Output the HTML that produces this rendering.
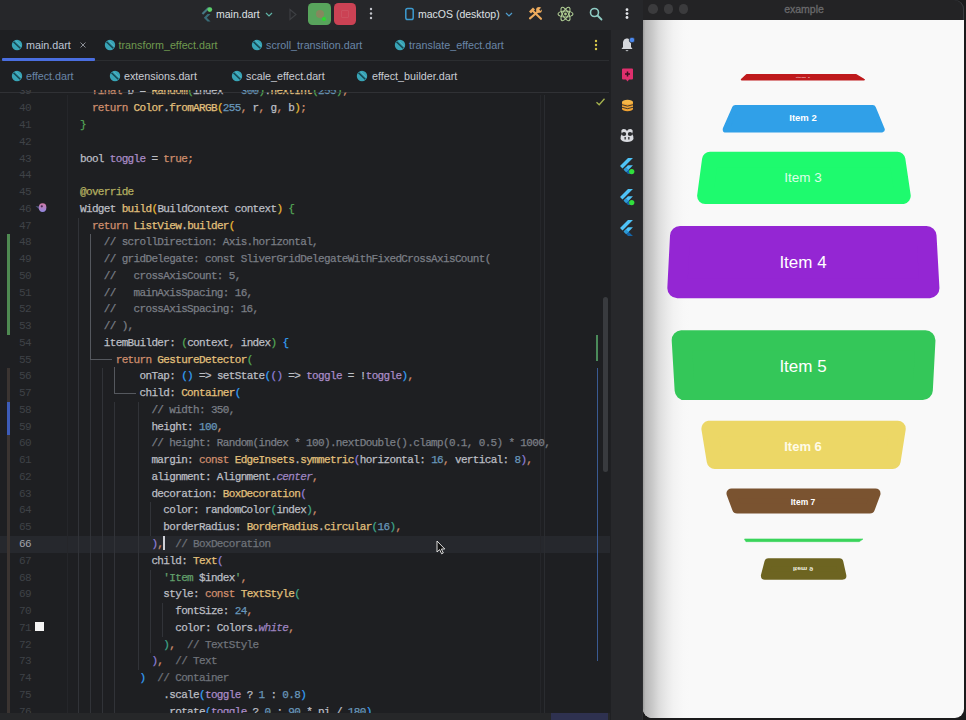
<!DOCTYPE html>
<html><head><meta charset="utf-8">
<style>
*{margin:0;padding:0;box-sizing:border-box}
html,body{width:966px;height:720px;overflow:hidden;background:#1e1f22}
body{position:relative;font-family:"Liberation Sans",sans-serif}
.abs{position:absolute}
#toolbar{position:absolute;left:0;top:0;width:643px;height:30px;background:#26272a}
#tabs{position:absolute;left:0;top:30px;width:610px;height:62px;background:#1e1f22}
.sep{position:absolute;height:1px;background:#2b2d30}
.tab{position:absolute;font-size:10.75px;line-height:14px;white-space:nowrap}
.tab svg{position:absolute}
.ui{position:absolute;font-size:10.5px;line-height:14px;white-space:nowrap;color:#dfe1e5}
#editor{position:absolute;left:0;top:89.5px;width:610px;height:623.5px;overflow:hidden;background:#1e1f22}
#code{position:absolute;left:0;top:-89.5px;width:610px;height:720px}
.ln,.num{position:absolute;font-family:"Liberation Mono",monospace;font-size:11px;letter-spacing:-0.65px;-webkit-text-stroke:0.25px currentColor;line-height:16.73px;height:16.73px;white-space:pre;color:#bcbec4}
.num{left:0;width:31px;text-align:right;color:#3f4247;-webkit-text-stroke:0}
.num.cur{color:#a1a3ab}
.w{color:#bcbec4}.k{color:#cf8e6d}.y{color:#e2c07c}.c{color:#7a7e85}.n{color:#6897bb}.p{color:#a98bc6}
.a{color:#b3ae60}.s{color:#62a06c}.o{color:#cf8e6d}.i{color:#9d84c0;font-style:italic}
.b1{color:#e8ba36}.b2{color:#54a857}.b3{color:#359ff4}.b4{color:#8f7fd8}.b5{color:#3fa68a}
.h{color:#6f737a}
.caret{display:inline-block;width:1.5px;height:14px;background:#ced0d6;vertical-align:-3px;margin-right:-1.5px}
#strip{position:absolute;left:610px;top:30px;width:33px;height:690px;background:#27282b;border-left:1px solid #1f2023;border-right:1.5px solid #2d2e30}
#bottom{position:absolute;left:0;top:713px;width:610px;height:7px;background:#262729}
#win{position:absolute;left:643px;top:0;width:323px;height:720px;background:#1b1b1c}
#wtitle{position:absolute;left:0;top:0;width:321px;height:20px;background:#232325;border-top-right-radius:9px;box-shadow:inset -1px 0 0 #3a3d40}
#wcontent{position:absolute;left:0;top:20px;width:321px;height:698px;background:#f9f9f9;border-radius:0 0 9px 9px;overflow:hidden}
</style></head>
<body>
<div id="toolbar">
  <svg class="abs" style="left:200px;top:6px" width="14" height="17" viewBox="0 0 14 17">
    <path d="M7.5 1.5 L10.5 1.5 L3.2 8.8 L1.7 7.3 Z" fill="#4f8f9c" opacity="0.8"/>
    <path d="M7.5 8 L10.5 8 L6.8 11.7 L10.5 15.4 L7.5 15.4 L3.8 11.7 Z" fill="#3f7e8c" opacity="0.8"/>
    <circle cx="9.8" cy="3.6" r="2.4" fill="#5ccf6a"/>
  </svg>
  <div class="ui" style="left:216px;top:7px">main.dart</div>
  <svg class="abs" style="left:264.5px;top:11.5px" width="8" height="5" viewBox="0 0 8 5"><path d="M1 1 L4 4 L7 1" stroke="#5fb3a6" stroke-width="1.2" fill="none"/></svg>
  <svg class="abs" style="left:288px;top:8px" width="10" height="13" viewBox="0 0 10 13"><path d="M2 1.5 L8 6.5 L2 11.5 Z" stroke="#3e4044" stroke-width="1.1" fill="none"/></svg>
  <div class="abs" style="left:307.5px;top:2.5px;width:23px;height:22.3px;border-radius:4.5px;background:#58a45c"></div>
  <div class="abs" style="left:315.5px;top:9.5px;width:8px;height:8px;border-radius:50%;background:#9a7c5e;opacity:0.7"></div>
  <div class="abs" style="left:321.6px;top:16.5px;width:4px;height:4px;border-radius:50%;background:#2bd92e"></div>
  <div class="abs" style="left:333.8px;top:2.5px;width:22.4px;height:22.3px;border-radius:4.5px;background:#cb4254"></div>
  <div class="abs" style="left:341px;top:9.5px;width:8px;height:8px;border-radius:1px;border:1px solid #cc5060"></div>
  <svg class="abs" style="left:368px;top:6px" width="6" height="16" viewBox="0 0 6 16"><circle cx="3" cy="3" r="1.2" fill="#c4c6cc"/><circle cx="3" cy="7.5" r="1.2" fill="#c4c6cc"/><circle cx="3" cy="12" r="1.2" fill="#c4c6cc"/></svg>
  <svg class="abs" style="left:404px;top:7px" width="11" height="14" viewBox="0 0 11 14"><rect x="1.8" y="1.5" width="7.4" height="11" rx="1.8" stroke="#3d9bd0" stroke-width="1.5" fill="none"/></svg>
  <div class="ui" style="left:418px;top:7px">macOS (desktop)</div>
  <svg class="abs" style="left:505px;top:11.5px" width="8" height="5" viewBox="0 0 8 5"><path d="M1 1 L4 4 L7 1" stroke="#4e9ccc" stroke-width="1.2" fill="none"/></svg>
  <svg class="abs" style="left:528px;top:6px" width="15" height="15" viewBox="0 0 15 15">
    <g stroke="#eeac5e" stroke-linecap="round" fill="none">
      <path d="M5 5 L13 12.8" stroke-width="2.1"/>
      <path d="M10.3 5.2 L2 12.4" stroke-width="2.1"/>
      <path d="M2 6.4 L6 2.4" stroke-width="2.8" stroke-linecap="butt"/>
    </g>
    <circle cx="11" cy="3.9" r="2.9" fill="#eeac5e"/>
    <path d="M11.2 3.6 L13.5 1.2 L14.8 2.6 L12.4 4.9 Z" fill="#26272a"/>
  </svg>
  <svg class="abs" style="left:557px;top:6px" width="17" height="16" viewBox="0 0 17 16">
    <g stroke="#b3d197" stroke-width="1.05" fill="none">
      <ellipse cx="8.5" cy="8" rx="7.5" ry="3" transform="rotate(60 8.5 8)"/>
      <ellipse cx="8.5" cy="8" rx="7.5" ry="3" transform="rotate(-60 8.5 8)"/>
      <ellipse cx="8.5" cy="8" rx="7.5" ry="3"/>
    </g><circle cx="8.5" cy="8" r="1.4" fill="#a9c986"/>
  </svg>
  <svg class="abs" style="left:589px;top:7px" width="14" height="14" viewBox="0 0 14 14"><circle cx="5.5" cy="5.5" r="4" stroke="#8ecbc3" stroke-width="1.6" fill="none"/><path d="M8.5 8.5 L12.5 12.5" stroke="#8ecbc3" stroke-width="1.8" stroke-linecap="round"/></svg>
  <svg class="abs" style="left:624px;top:6px" width="6" height="16" viewBox="0 0 6 16"><circle cx="3" cy="3.7" r="1.4" fill="#e4e6ea"/><circle cx="3" cy="7.6" r="1.4" fill="#e4e6ea"/><circle cx="3" cy="11.5" r="1.4" fill="#e4e6ea"/></svg>
</div>
<div id="tabs"><div class="sep" style="left:0;top:30px;width:609px"></div><div class="sep" style="left:0;top:61px;width:609px"></div><div class="abs" style="left:2px;top:28px;width:93px;height:3px;background:#4a6ee0;border-radius:1px"></div><svg class="abs" style="left:11px;top:9px" width="12" height="12" viewBox="0 0 12 12"><circle cx="6" cy="6" r="5.2" fill="#38a4b6"/><path d="M2.5 2.8 L9.2 9.3" stroke="#15454f" stroke-width="1.6"/><path d="M4.5 1.5 L10.5 7.5" stroke="#7fd0dc" stroke-width="0.7" opacity="0.5"/></svg><div class="tab" style="left:26px;top:8px;color:#bfc6d6">main.dart</div><svg class="abs" style="left:104px;top:9px" width="12" height="12" viewBox="0 0 12 12"><circle cx="6" cy="6" r="5.2" fill="#38a4b6"/><path d="M2.5 2.8 L9.2 9.3" stroke="#15454f" stroke-width="1.6"/><path d="M4.5 1.5 L10.5 7.5" stroke="#7fd0dc" stroke-width="0.7" opacity="0.5"/></svg><div class="tab" style="left:118.5px;top:8px;color:#6f9a4f">transform_effect.dart</div><svg class="abs" style="left:250.5px;top:9px" width="12" height="12" viewBox="0 0 12 12"><circle cx="6" cy="6" r="5.2" fill="#38a4b6"/><path d="M2.5 2.8 L9.2 9.3" stroke="#15454f" stroke-width="1.6"/><path d="M4.5 1.5 L10.5 7.5" stroke="#7fd0dc" stroke-width="0.7" opacity="0.5"/></svg><div class="tab" style="left:266px;top:8px;color:#6a86a8">scroll_transition.dart</div><svg class="abs" style="left:394px;top:9px" width="12" height="12" viewBox="0 0 12 12"><circle cx="6" cy="6" r="5.2" fill="#38a4b6"/><path d="M2.5 2.8 L9.2 9.3" stroke="#15454f" stroke-width="1.6"/><path d="M4.5 1.5 L10.5 7.5" stroke="#7fd0dc" stroke-width="0.7" opacity="0.5"/></svg><div class="tab" style="left:409px;top:8px;color:#6a86a8">translate_effect.dart</div><svg class="abs" style="left:11px;top:40px" width="12" height="12" viewBox="0 0 12 12"><circle cx="6" cy="6" r="5.2" fill="#38a4b6"/><path d="M2.5 2.8 L9.2 9.3" stroke="#15454f" stroke-width="1.6"/><path d="M4.5 1.5 L10.5 7.5" stroke="#7fd0dc" stroke-width="0.7" opacity="0.5"/></svg><div class="tab" style="left:26px;top:39px;color:#6a86a8">effect.dart</div><svg class="abs" style="left:109px;top:40px" width="12" height="12" viewBox="0 0 12 12"><circle cx="6" cy="6" r="5.2" fill="#38a4b6"/><path d="M2.5 2.8 L9.2 9.3" stroke="#15454f" stroke-width="1.6"/><path d="M4.5 1.5 L10.5 7.5" stroke="#7fd0dc" stroke-width="0.7" opacity="0.5"/></svg><div class="tab" style="left:124px;top:39px;color:#c9ccd3">extensions.dart</div><svg class="abs" style="left:231px;top:40px" width="12" height="12" viewBox="0 0 12 12"><circle cx="6" cy="6" r="5.2" fill="#38a4b6"/><path d="M2.5 2.8 L9.2 9.3" stroke="#15454f" stroke-width="1.6"/><path d="M4.5 1.5 L10.5 7.5" stroke="#7fd0dc" stroke-width="0.7" opacity="0.5"/></svg><div class="tab" style="left:246px;top:39px;color:#c9ccd3">scale_effect.dart</div><svg class="abs" style="left:356px;top:40px" width="12" height="12" viewBox="0 0 12 12"><circle cx="6" cy="6" r="5.2" fill="#38a4b6"/><path d="M2.5 2.8 L9.2 9.3" stroke="#15454f" stroke-width="1.6"/><path d="M4.5 1.5 L10.5 7.5" stroke="#7fd0dc" stroke-width="0.7" opacity="0.5"/></svg><div class="tab" style="left:372px;top:39px;color:#c9ccd3">effect_builder.dart</div><svg class="abs" style="left:79px;top:11px" width="8" height="8" viewBox="0 0 8 8"><path d="M1.5 1.5 L6.5 6.5 M6.5 1.5 L1.5 6.5" stroke="#8c8f96" stroke-width="1"/></svg><svg class="abs" style="left:593px;top:9px" width="6" height="12" viewBox="0 0 6 12"><circle cx="3" cy="2" r="1.2" fill="#d8c84a"/><circle cx="3" cy="6" r="1.2" fill="#d8c84a"/><circle cx="3" cy="10" r="1.2" fill="#d8c84a"/></svg></div>
<div id="editor"><div id="code">
<div class="abs" style="left:0;top:535.98px;width:610px;height:16.76px;background:#26282d"></div>
<div class="abs" style="left:6.5px;top:234.30px;width:3.8px;height:100.56px;background:#4f8a52"></div>
<div class="abs" style="left:6.5px;top:368.38px;width:3.8px;height:344.62px;background:#3b3431"></div>
<div class="abs" style="left:6.5px;top:401.90px;width:3.8px;height:33.52px;background:#3d5cb8"></div>
<div class="abs" style="left:66.5px;top:95px;width:1px;height:618px;background:#25262a"></div>
<div class="abs" style="left:78.20px;top:217.54px;width:1px;height:502.80px;background:#313338"></div>
<div class="abs" style="left:90.10px;top:351.62px;width:1px;height:368.72px;background:#313338"></div>
<div class="abs" style="left:102.00px;top:368.38px;width:1px;height:351.96px;background:#313338"></div>
<div class="abs" style="left:113.90px;top:401.90px;width:1px;height:318.44px;background:#313338"></div>
<div class="abs" style="left:137.70px;top:401.90px;width:1px;height:268.16px;background:#313338"></div>
<div class="abs" style="left:149.60px;top:502.46px;width:1px;height:33.52px;background:#313338"></div>
<div class="abs" style="left:149.60px;top:569.50px;width:1px;height:83.80px;background:#313338"></div>
<div class="abs" style="left:161.50px;top:603.02px;width:1px;height:33.52px;background:#313338"></div>
<div class="abs" style="left:90.10px;top:234.30px;width:1px;height:124.70px;background:#55585e"></div>
<div class="abs" style="left:90.10px;top:359.00px;width:21.90px;height:1px;background:#55585e"></div>
<div class="abs" style="left:113.90px;top:367.38px;width:1px;height:25.14px;background:#55585e"></div>
<div class="abs" style="left:113.90px;top:392.52px;width:22.60px;height:1px;background:#55585e"></div>
<div class="abs" style="left:35px;top:622px;width:9px;height:9px;background:#f4f4f4"></div>
<svg class="abs" style="left:34px;top:200px" width="14" height="14" viewBox="0 0 14 14"><defs><linearGradient id="og" x1="0" y1="0" x2="0" y2="1"><stop offset="0" stop-color="#d27aa6"/><stop offset="1" stop-color="#8f86e0"/></linearGradient></defs><path d="M1.5 6 L6 6.5 L7 11 Z" fill="#5d6aa0" opacity="0.7"/><ellipse cx="8.6" cy="7.6" rx="3.8" ry="4.4" fill="url(#og)"/><circle cx="7.8" cy="6.3" r="1.1" fill="#4a2a50"/></svg>
<div class="abs" style="left:540px;top:95px;width:1px;height:618px;background:#25262a"></div>
<div class="abs" style="left:543.5px;top:95px;width:1px;height:618px;background:#2a2c30"></div>
<svg class="abs" style="left:595px;top:97px" width="11" height="10" viewBox="0 0 11 10"><path d="M1.5 5.2 L4.2 7.8 L9.5 1.8" stroke="#a6b34e" stroke-width="1.3" fill="none"/></svg>
<div class="abs" style="left:602.5px;top:297px;width:5.5px;height:175px;border-radius:3px;background:#393b3f"></div>
<div class="abs" style="left:596px;top:335px;width:2px;height:26px;background:#4b8a5a"></div>
<div class="abs" style="left:596.5px;top:368px;width:1.5px;height:293px;background:#3a5a92"></div>
<svg class="abs" style="left:436px;top:540px" width="10" height="15" viewBox="0 0 10 15"><path d="M1 1 L1 12 L3.6 9.6 L5.6 13.8 L7.3 13 L5.4 9 L8.8 9 Z" fill="#111" stroke="#eee" stroke-width="0.9" stroke-linejoin="round"/></svg>
<div class="abs" style="left:0;top:91.6px;width:609px;height:1px;background:rgba(60,62,66,0.6);z-index:2"></div>
<div class="ln" style="top:83.46px;left:91.90px"><span class="k">final </span><span class="w">b = </span><span class="y">Random</span><span class="b2">(</span><span class="w">index * </span><span class="n">300</span><span class="b2">)</span><span class="w">.</span><span class="y">nextInt</span><span class="b2">(</span><span class="n">255</span><span class="b2">)</span><span class="o">;</span></div>
<div class="num" style="top:83.46px">39</div>
<div class="ln" style="top:100.22px;left:91.90px"><span class="k">return </span><span class="y">Color</span><span class="w">.</span><span class="y">fromARGB</span><span class="b1">(</span><span class="n">255</span><span class="o">, </span><span class="w">r</span><span class="o">, </span><span class="w">g</span><span class="o">, </span><span class="w">b</span><span class="b1">)</span><span class="o">;</span></div>
<div class="num" style="top:100.22px">40</div>
<div class="ln" style="top:116.98px;left:80.00px"><span class="b2">}</span></div>
<div class="num" style="top:116.98px">41</div>
<div class="num" style="top:133.74px">42</div>
<div class="ln" style="top:150.50px;left:80.00px"><span class="w">bool </span><span class="p">toggle</span><span class="w"> = </span><span class="k">true</span><span class="o">;</span></div>
<div class="num" style="top:150.50px">43</div>
<div class="num" style="top:167.26px">44</div>
<div class="ln" style="top:184.02px;left:80.00px"><span class="a">@override</span></div>
<div class="num" style="top:184.02px">45</div>
<div class="ln" style="top:200.78px;left:80.00px"><span class="w">Widget </span><span class="y">build</span><span class="b1">(</span><span class="w">BuildContext context</span><span class="b1">)</span><span class="w"> </span><span class="b2">{</span></div>
<div class="num" style="top:200.78px">46</div>
<div class="ln" style="top:217.54px;left:91.90px"><span class="k">return </span><span class="y">ListView</span><span class="w">.</span><span class="y">builder</span><span class="b1">(</span></div>
<div class="num" style="top:217.54px">47</div>
<div class="ln" style="top:234.30px;left:103.80px"><span class="c">// scrollDirection: Axis.horizontal,</span></div>
<div class="num" style="top:234.30px">48</div>
<div class="ln" style="top:251.06px;left:103.80px"><span class="c">// gridDelegate: const SliverGridDelegateWithFixedCrossAxisCount(</span></div>
<div class="num" style="top:251.06px">49</div>
<div class="ln" style="top:267.82px;left:103.80px"><span class="c">//   crossAxisCount: 5,</span></div>
<div class="num" style="top:267.82px">50</div>
<div class="ln" style="top:284.58px;left:103.80px"><span class="c">//   mainAxisSpacing: 16,</span></div>
<div class="num" style="top:284.58px">51</div>
<div class="ln" style="top:301.34px;left:103.80px"><span class="c">//   crossAxisSpacing: 16,</span></div>
<div class="num" style="top:301.34px">52</div>
<div class="ln" style="top:318.10px;left:103.80px"><span class="c">// ),</span></div>
<div class="num" style="top:318.10px">53</div>
<div class="ln" style="top:334.86px;left:103.80px"><span class="w">itemBuilder: </span><span class="b2">(</span><span class="w">context</span><span class="o">, </span><span class="w">index</span><span class="b2">)</span><span class="w"> </span><span class="b3">{</span></div>
<div class="num" style="top:334.86px">54</div>
<div class="ln" style="top:351.62px;left:115.70px"><span class="k">return </span><span class="y">GestureDetector</span><span class="b2">(</span></div>
<div class="num" style="top:351.62px">55</div>
<div class="ln" style="top:368.38px;left:139.50px"><span class="w">onTap: </span><span class="b3">()</span><span class="w"> =&gt; setState</span><span class="b3">(</span><span class="b4">()</span><span class="w"> =&gt; </span><span class="p">toggle</span><span class="w"> = !</span><span class="p">toggle</span><span class="b3">)</span><span class="o">,</span></div>
<div class="num" style="top:368.38px">56</div>
<div class="ln" style="top:385.14px;left:139.50px"><span class="w">child: </span><span class="y">Container</span><span class="b3">(</span></div>
<div class="num" style="top:385.14px">57</div>
<div class="ln" style="top:401.90px;left:151.40px"><span class="c">// width: 350,</span></div>
<div class="num" style="top:401.90px">58</div>
<div class="ln" style="top:418.66px;left:151.40px"><span class="w">height: </span><span class="n">100</span><span class="o">,</span></div>
<div class="num" style="top:418.66px">59</div>
<div class="ln" style="top:435.42px;left:151.40px"><span class="c">// height: Random(index * 100).nextDouble().clamp(0.1, 0.5) * 1000,</span></div>
<div class="num" style="top:435.42px">60</div>
<div class="ln" style="top:452.18px;left:151.40px"><span class="w">margin: </span><span class="k">const </span><span class="y">EdgeInsets</span><span class="w">.</span><span class="y">symmetric</span><span class="b4">(</span><span class="w">horizontal: </span><span class="n">16</span><span class="o">, </span><span class="w">vertical: </span><span class="n">8</span><span class="b4">)</span><span class="o">,</span></div>
<div class="num" style="top:452.18px">61</div>
<div class="ln" style="top:468.94px;left:151.40px"><span class="w">alignment: Alignment.</span><span class="i">center</span><span class="o">,</span></div>
<div class="num" style="top:468.94px">62</div>
<div class="ln" style="top:485.70px;left:151.40px"><span class="w">decoration: </span><span class="y">BoxDecoration</span><span class="b4">(</span></div>
<div class="num" style="top:485.70px">63</div>
<div class="ln" style="top:502.46px;left:163.30px"><span class="w">color: randomColor</span><span class="b5">(</span><span class="w">index</span><span class="b5">)</span><span class="o">,</span></div>
<div class="num" style="top:502.46px">64</div>
<div class="ln" style="top:519.22px;left:163.30px"><span class="w">borderRadius: </span><span class="y">BorderRadius</span><span class="w">.</span><span class="y">circular</span><span class="b5">(</span><span class="n">16</span><span class="b5">)</span><span class="o">,</span></div>
<div class="num" style="top:519.22px">65</div>
<div class="ln" style="top:535.98px;left:151.40px"><span class="b4">)</span><span class="o">,</span><i class="caret"></i><span class="h">  // BoxDecoration</span></div>
<div class="num cur" style="top:535.98px">66</div>
<div class="ln" style="top:552.74px;left:151.40px"><span class="w">child: </span><span class="y">Text</span><span class="b4">(</span></div>
<div class="num" style="top:552.74px">67</div>
<div class="ln" style="top:569.50px;left:163.30px"><span class="s">&#x27;Item </span><span class="w">$index</span><span class="s">&#x27;</span><span class="o">,</span></div>
<div class="num" style="top:569.50px">68</div>
<div class="ln" style="top:586.26px;left:163.30px"><span class="w">style: </span><span class="k">const </span><span class="y">TextStyle</span><span class="b5">(</span></div>
<div class="num" style="top:586.26px">69</div>
<div class="ln" style="top:603.02px;left:175.20px"><span class="w">fontSize: </span><span class="n">24</span><span class="o">,</span></div>
<div class="num" style="top:603.02px">70</div>
<div class="ln" style="top:619.78px;left:175.20px"><span class="w">color: Colors.</span><span class="i">white</span><span class="o">,</span></div>
<div class="num" style="top:619.78px">71</div>
<div class="ln" style="top:636.54px;left:163.30px"><span class="b5">)</span><span class="o">,</span><span class="h">  // TextStyle</span></div>
<div class="num" style="top:636.54px">72</div>
<div class="ln" style="top:653.30px;left:151.40px"><span class="b4">)</span><span class="o">,</span><span class="h">  // Text</span></div>
<div class="num" style="top:653.30px">73</div>
<div class="ln" style="top:670.06px;left:139.50px"><span class="b3">)</span><span class="h">  // Container</span></div>
<div class="num" style="top:670.06px">74</div>
<div class="ln" style="top:686.82px;left:163.30px"><span class="w">.scale</span><span class="b3">(</span><span class="p">toggle</span><span class="w"> ? </span><span class="n">1</span><span class="w"> : </span><span class="n">0.8</span><span class="b3">)</span></div>
<div class="num" style="top:686.82px">75</div>
<div class="ln" style="top:703.58px;left:163.30px"><span class="w">.rotate</span><span class="b3">(</span><span class="p">toggle</span><span class="w"> ? </span><span class="n">0</span><span class="w"> : </span><span class="n">90</span><span class="w"> * pi / </span><span class="n">180</span><span class="b3">)</span></div>
<div class="num" style="top:703.58px">76</div>
</div></div>
<div id="bottom"><div class="abs" style="left:551px;top:0;width:57px;height:7px;background:#2e3150"></div></div>
<div id="strip">
  <svg class="abs" style="left:9px;top:6px" width="16" height="17" viewBox="0 0 16 17">
    <path d="M7 2.5 C4.2 2.5 3 4.8 3 7.5 L3 11 L1.5 13 L12.5 13 L11 11 L11 7.5 C11 4.8 9.8 2.5 7 2.5 Z" fill="#d5d7dc"/>
    <path d="M5.5 14.2 A1.6 1.6 0 0 0 8.5 14.2 Z" fill="#d5d7dc"/>
    <circle cx="12" cy="4" r="2.8" fill="#4b88ee" stroke="#2b2d30" stroke-width="0.8"/>
  </svg>
  <svg class="abs" style="left:10px;top:38px" width="13" height="15" viewBox="0 0 13 15">
    <path d="M1 1.5 Q1 0.5 2 0.5 L11 0.5 Q12 0.5 12 1.5 L12 10.5 Q12 11.5 11 11.5 L8 11.5 L6.5 13.5 L5 11.5 L2 11.5 Q1 11.5 1 10.5 Z" fill="#df2f6d"/>
    <path d="M6.5 3.5 L6.5 8.5 M4 6 L9 6" stroke="#3a1020" stroke-width="1.5"/>
  </svg>
  <svg class="abs" style="left:10px;top:69px" width="13" height="13" viewBox="0 0 13 13">
    <ellipse cx="6.5" cy="10" rx="5.5" ry="2.2" fill="#f0a232"/>
    <rect x="1" y="3" width="11" height="7" fill="#f0a232"/>
    <ellipse cx="6.5" cy="3" rx="5.5" ry="2.2" fill="#f6b748"/>
    <path d="M1 5.7 Q6.5 8.5 12 5.7 M1 8.3 Q6.5 11 12 8.3" stroke="#2b2d30" stroke-width="0.9" fill="none"/>
  </svg>
  <svg class="abs" style="left:8px;top:98px" width="16" height="15" viewBox="0 0 16 15">
    <path d="M3 6 Q1 1.5 4.5 1 Q7 0.8 8 3 Q9 0.8 11.5 1 Q15 1.5 13 6 Q15 8 14.5 11 Q13 14 8 14 Q3 14 1.5 11 Q1 8 3 6 Z" fill="#d9dbe0"/>
    <ellipse cx="5" cy="6" rx="2.2" ry="2" fill="#2b2d30"/><ellipse cx="11" cy="6" rx="2.2" ry="2" fill="#2b2d30"/>
    <rect x="5.5" y="9" width="1.3" height="2.5" fill="#2b2d30"/><rect x="9.2" y="9" width="1.3" height="2.5" fill="#2b2d30"/>
  </svg>
</div>
<svg class="abs" style="left:619.5px;top:158px;overflow:visible" width="13" height="16" viewBox="0 0 256 317"><path d="M157.7 0 L0 157.7 L48.8 206.4 L255.3 0 Z" fill="#4fc3f7"/><path d="M156.6 145.4 L72.1 229.9 L121.1 279.7 L170 230.8 L255.3 145.4 Z" fill="#4fc3f7"/><path d="M121.1 279.7 L158.4 317 L255.3 317 L170 230.8 Z" fill="#1565a8"/><path d="M71.7 230.3 L120.5 181.4 L170 230.8 L121.1 279.7 Z" fill="#2a9ad8"/><circle cx="232" cy="268" r="52" fill="#31df3c"/></svg><svg class="abs" style="left:619.5px;top:189px;overflow:visible" width="13" height="16" viewBox="0 0 256 317"><path d="M157.7 0 L0 157.7 L48.8 206.4 L255.3 0 Z" fill="#4fc3f7"/><path d="M156.6 145.4 L72.1 229.9 L121.1 279.7 L170 230.8 L255.3 145.4 Z" fill="#4fc3f7"/><path d="M121.1 279.7 L158.4 317 L255.3 317 L170 230.8 Z" fill="#1565a8"/><path d="M71.7 230.3 L120.5 181.4 L170 230.8 L121.1 279.7 Z" fill="#2a9ad8"/><circle cx="232" cy="268" r="52" fill="#31df3c"/></svg><svg class="abs" style="left:619.5px;top:220px;overflow:visible" width="13" height="16" viewBox="0 0 256 317"><path d="M157.7 0 L0 157.7 L48.8 206.4 L255.3 0 Z" fill="#4fc3f7"/><path d="M156.6 145.4 L72.1 229.9 L121.1 279.7 L170 230.8 L255.3 145.4 Z" fill="#4fc3f7"/><path d="M121.1 279.7 L158.4 317 L255.3 317 L170 230.8 Z" fill="#1565a8"/><path d="M71.7 230.3 L120.5 181.4 L170 230.8 L121.1 279.7 Z" fill="#2a9ad8"/></svg>
<div id="win">
  <div id="wtitle">
  <div class="abs" style="left:5.2px;top:4.4px;width:9.5px;height:9.5px;border-radius:50%;background:#3b3b3d"></div>
  <div class="abs" style="left:20.5px;top:4.4px;width:9.5px;height:9.5px;border-radius:50%;background:#3b3b3d"></div>
  <div class="abs" style="left:35.6px;top:4.4px;width:9.5px;height:9.5px;border-radius:50%;background:#3b3b3d"></div>
  <div class="abs" style="left:0;top:3px;width:322px;text-align:center;font-size:10.5px;line-height:13px;color:#6a6a6c;-webkit-text-stroke:0.3px #6a6a6c">example</div>
</div>
  <div id="wcontent"><div class="abs" style="left:0;top:0;width:48px;height:698px;background:linear-gradient(to right,#9c9c9c 0px,#b8b8b8 2.5px,#c9c9c9 9.5px,#dcdcdc 16px,#e8e8e8 23px,#f2f2f2 30px,#f8f8f8 40px,#f9f9f9 48px)"></div><svg class="abs" style="left:0;top:0" width="321" height="698" viewBox="643 20 321 698"><path d="M746.71 74.90 L856.18 74.90 L864.09 79.60 L741.56 79.60 Z" fill="#bf1a1c" stroke="#bf1a1c" stroke-width="1.60" stroke-linejoin="round"/><text x="0" y="0" transform="translate(803.0 77.2) scale(1 0.5)" font-family="Liberation Sans" font-size="5" font-weight="bold" fill="#f0b0b0" text-anchor="middle" dominant-baseline="central">Item 1</text><path d="M735.29 108.10 L872.76 108.10 L881.52 129.40 L725.91 129.40 Z" fill="#30a0e8" stroke="#30a0e8" stroke-width="6.40" stroke-linejoin="round"/><text x="0" y="0" transform="translate(803.0 117.5) scale(1 1)" font-family="Liberation Sans" font-size="9.5" font-weight="bold" fill="#ffffff" text-anchor="middle" dominant-baseline="central">Item 2</text><path d="M710.00 159.70 L897.39 159.70 L902.74 196.00 L705.14 196.00 Z" fill="#1efa6e" stroke="#1efa6e" stroke-width="16.00" stroke-linejoin="round"/><text x="0" y="0" transform="translate(803.0 177.2) scale(1 1)" font-family="Liberation Sans" font-size="13.5" font-weight="normal" fill="#dcffe6" text-anchor="middle" dominant-baseline="central">Item 3</text><path d="M680.00 235.90 L926.54 235.90 L929.43 288.20 L677.32 288.20 Z" fill="#9426d3" stroke="#9426d3" stroke-width="20.00" stroke-linejoin="round"/><text x="0" y="0" transform="translate(803.0 262.1) scale(1 1)" font-family="Liberation Sans" font-size="17" font-weight="normal" fill="#ffffff" text-anchor="middle" dominant-baseline="central">Item 4</text><path d="M681.70 340.20 L925.46 340.20 L922.82 390.10 L684.63 390.10 Z" fill="#34c759" stroke="#34c759" stroke-width="20.00" stroke-linejoin="round"/><text x="0" y="0" transform="translate(803.0 366.6) scale(1 1)" font-family="Liberation Sans" font-size="17" font-weight="normal" fill="#ffffff" text-anchor="middle" dominant-baseline="central">Item 5</text><path d="M709.41 428.70 L897.74 428.70 L892.66 461.00 L714.70 461.00 Z" fill="#ecd766" stroke="#ecd766" stroke-width="16.00" stroke-linejoin="round"/><text x="0" y="0" transform="translate(803.0 446.7) scale(1 1)" font-family="Liberation Sans" font-size="13" font-weight="bold" fill="#fffbe8" text-anchor="middle" dominant-baseline="central">Item 6</text><path d="M731.48 493.40 L875.52 493.40 L869.92 508.50 L737.08 508.50 Z" fill="#7a5330" stroke="#7a5330" stroke-width="10.00" stroke-linejoin="round"/><text x="0" y="0" transform="translate(803.0 502.1) scale(1 1)" font-family="Liberation Sans" font-size="8.5" font-weight="bold" fill="#ffffff" text-anchor="middle" dominant-baseline="central">Item 7</text><path d="M744.57 539.10 L862.76 539.10 L859.27 541.60 L745.94 541.60 Z" fill="#3ad45b" stroke="#3ad45b" stroke-width="0.80" stroke-linejoin="round"/><path d="M768.39 562.30 L839.38 562.30 L842.33 575.70 L764.88 575.70 Z" fill="#6d6421" stroke="#6d6421" stroke-width="8.00" stroke-linejoin="round"/><text x="0" y="0" transform="translate(803.0 569.0) scale(1 -0.75)" font-family="Liberation Sans" font-size="7" font-weight="bold" fill="#f0f0e0" text-anchor="middle" dominant-baseline="central">Item 9</text></svg></div>
</div>
</body></html>
